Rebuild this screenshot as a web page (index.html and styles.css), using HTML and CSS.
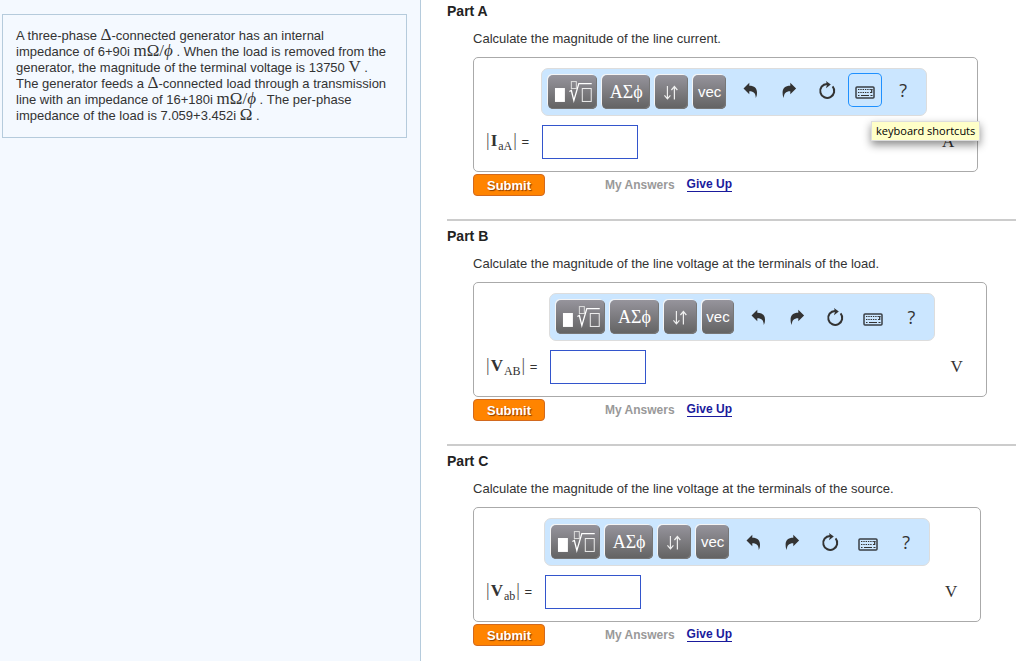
FILE: index.html
```
<!DOCTYPE html>
<html lang="en">
<head>
    <meta charset="UTF-8">
    <meta name="viewport" content="width=device-width, initial-scale=1.0">
    <title>Three-phase generator</title>
    <link rel="stylesheet" href="styles.css">
</head>
<body>
    <!-- shared toolbar icons -->
    <svg class="sprite" aria-hidden="true">
        <symbol id="i-template" viewBox="0 0 49 34">
            <rect x="7" y="13" width="10" height="14" fill="#fff"/>
            <rect x="23.5" y="6.5" width="5" height="7" fill="none" stroke="#ddd"/>
            <path d="M21.500 16.500L23.500 15.500L26 25.500L31 8.500H44" fill="none" stroke="#fff" stroke-width="1.300"/>
            <rect x="34.500" y="13.500" width="9" height="13" fill="none" stroke="#eee"/>
        </symbol>
        <symbol id="i-arrows" viewBox="0 0 33 34">
            <path d="M12.500 11V24M9.500 20.500L12.500 24L15.500 20.500M19.500 24.500V11.500M16.500 15L19.500 11.500L22.500 15" fill="none" stroke="#eee" stroke-width="1.200"/>
        </symbol>
        <symbol id="i-undo" viewBox="0 0 34 34">
            <path d="M9.500 15.500L15.300 9.800V12.800C20.500 12.800 23 15.500 23 19.500C23 22 22.600 23.500 21.800 25C21.600 20.500 20 18.300 15.300 18.300V21.300Z" fill="#333"/>
        </symbol>
        <symbol id="i-redo" viewBox="0 0 34 34">
            <path d="M24.100 15.500L18.300 9.800V12.800C13.100 12.800 10.600 15.500 10.600 19.500C10.600 22 11 23.500 11.800 25C12 20.500 13.600 18.300 18.300 18.300V21.300Z" fill="#333"/>
        </symbol>
        <symbol id="i-reset" viewBox="0 0 34 34">
            <path d="M17 10.900A7 7 0 1 0 22.600 13.400" fill="none" stroke="#333" stroke-width="2"/>
            <path d="M16 8L20.800 11.500L16 15.300L17 11.500Z" fill="#333"/>
        </symbol>
        <symbol id="i-keyboard" viewBox="0 0 34 34">
            <rect x="8" y="14" width="18" height="11" rx="1" fill="none" stroke="#3a3f45" stroke-width="1.500"/>
            <path d="M10 16.500H24.500M10 19.500H21" fill="none" stroke="#333" stroke-width="1.200" stroke-dasharray="1.400 0.900"/>
            <path d="M23.700 16V19.500H22M10 22.500H11.500M13 22.500H21M22.500 22.500H24.500" fill="none" stroke="#333" stroke-width="1.200"/>
        </symbol>
    </svg>

    <div class="page">
        <aside class="sidebar">
            <p class="problem">A three-phase <span class="math">Δ</span>-connected generator has an internal impedance of 6+90i <span class="math">mΩ/<i>ϕ</i></span> . When the load is removed from the generator, the magnitude of the terminal voltage is 13750 <span class="math">V</span> . The generator feeds a <span class="math">Δ</span>-connected load through a transmission line with an impedance of 16+180i <span class="math">mΩ/<i>ϕ</i></span> . The per-phase impedance of the load is 7.059+3.452i <span class="math">Ω</span> .</p>
        </aside>

        <main class="parts">
            <section class="part">
                <h2>Part A</h2>
                <div class="part-body">
                    <p class="question">Calculate the magnitude of the line current.</p>
                    <div class="answer-box">
                        <div class="toolbar">
                            <button type="button" class="key wide" aria-label="templates"><svg><use href="#i-template"/></svg></button>
                            <button type="button" class="key wide greek">ΑΣϕ</button>
                            <button type="button" class="key" aria-label="arrows"><svg><use href="#i-arrows"/></svg></button>
                            <button type="button" class="key">vec</button>
                            <div class="tools">
                                <button type="button" class="tool" aria-label="undo"><svg><use href="#i-undo"/></svg></button>
                                <button type="button" class="tool" aria-label="redo"><svg><use href="#i-redo"/></svg></button>
                                <button type="button" class="tool" aria-label="reset"><svg><use href="#i-reset"/></svg></button>
                                <div class="tip-anchor">
                                    <button type="button" class="tool active" aria-label="keyboard shortcuts"><svg><use href="#i-keyboard"/></svg></button>
                                    <span class="tooltip" role="tooltip">keyboard shortcuts</span>
                                </div>
                                <button type="button" class="tool help">?</button>
                            </div>
                        </div>
                        <label for="answer-a"><span class="math"><span class="bar">|</span><b>I</b><sub>aA</sub><span class="bar">|</span></span> =</label>
                        <input type="text" id="answer-a">
                        <span class="unit">A</span>
                    </div>
                    <div class="actions">
                        <button type="button" class="submit">Submit</button>
                        <span class="my-answers">My Answers</span>
                        <a href="#" class="give-up">Give Up</a>
                    </div>
                </div>
            </section>

            <section class="part">
                <h2>Part B</h2>
                <div class="part-body">
                    <p class="question">Calculate the magnitude of the line voltage at the terminals of the load.</p>
                    <div class="answer-box">
                        <div class="toolbar">
                            <button type="button" class="key wide" aria-label="templates"><svg><use href="#i-template"/></svg></button>
                            <button type="button" class="key wide greek">ΑΣϕ</button>
                            <button type="button" class="key" aria-label="arrows"><svg><use href="#i-arrows"/></svg></button>
                            <button type="button" class="key">vec</button>
                            <div class="tools">
                                <button type="button" class="tool" aria-label="undo"><svg><use href="#i-undo"/></svg></button>
                                <button type="button" class="tool" aria-label="redo"><svg><use href="#i-redo"/></svg></button>
                                <button type="button" class="tool" aria-label="reset"><svg><use href="#i-reset"/></svg></button>
                                <button type="button" class="tool" aria-label="keyboard shortcuts"><svg><use href="#i-keyboard"/></svg></button>
                                <button type="button" class="tool help">?</button>
                            </div>
                        </div>
                        <label for="answer-b"><span class="math"><span class="bar">|</span><b>V</b><sub>AB</sub><span class="bar">|</span></span> =</label>
                        <input type="text" id="answer-b">
                        <span class="unit">V</span>
                    </div>
                    <div class="actions">
                        <button type="button" class="submit">Submit</button>
                        <span class="my-answers">My Answers</span>
                        <a href="#" class="give-up">Give Up</a>
                    </div>
                </div>
            </section>

            <section class="part">
                <h2>Part C</h2>
                <div class="part-body">
                    <p class="question">Calculate the magnitude of the line voltage at the terminals of the source.</p>
                    <div class="answer-box">
                        <div class="toolbar">
                            <button type="button" class="key wide" aria-label="templates"><svg><use href="#i-template"/></svg></button>
                            <button type="button" class="key wide greek">ΑΣϕ</button>
                            <button type="button" class="key" aria-label="arrows"><svg><use href="#i-arrows"/></svg></button>
                            <button type="button" class="key">vec</button>
                            <div class="tools">
                                <button type="button" class="tool" aria-label="undo"><svg><use href="#i-undo"/></svg></button>
                                <button type="button" class="tool" aria-label="redo"><svg><use href="#i-redo"/></svg></button>
                                <button type="button" class="tool" aria-label="reset"><svg><use href="#i-reset"/></svg></button>
                                <button type="button" class="tool" aria-label="keyboard shortcuts"><svg><use href="#i-keyboard"/></svg></button>
                                <button type="button" class="tool help">?</button>
                            </div>
                        </div>
                        <label for="answer-c"><span class="math"><span class="bar">|</span><b>V</b><sub>ab</sub><span class="bar">|</span></span> =</label>
                        <input type="text" id="answer-c">
                        <span class="unit">V</span>
                    </div>
                    <div class="actions">
                        <button type="button" class="submit">Submit</button>
                        <span class="my-answers">My Answers</span>
                        <a href="#" class="give-up">Give Up</a>
                    </div>
                </div>
            </section>
        </main>
    </div>
</body>
</html>
```
FILE: styles.css
```
* {
    box-sizing: border-box;
}
body {
    margin: 0;
    background: #fff;
    color: #333;
    font: 13px/16px "Liberation Sans", Arial, sans-serif;
}
h2, p {
    margin: 0;
}
button {
    padding: 0;
    font-family: inherit;
    cursor: pointer;
}
.sprite {
    display: none;
}
.page {
    display: flex;
    min-height: 100vh;
}
.sidebar {
    width: 41.44%;
    padding: 14px 13px 0 2px;
    background: #f4f9ff;
    border-right: 1px solid #b5cbdc;
}
.problem {
    padding: 13px 16px 13px 13px;
    border: 1px solid #b5cbdc;
}
.math, .unit {
    font-family: "Liberation Serif", "Times New Roman", serif;
    font-size: 17px;
    line-height: 0;
}
.parts {
    flex: 1;
    padding: 3px 0 0 26px;
}
.part + .part {
    margin-top: 23px;
    padding-top: 7px;
    border-top: 2px solid #ccc;
}
.part h2 {
    color: #222;
    font-size: 14px;
    line-height: 16px;
}
.part-body {
    padding: 12px 0 0 26px;
}
.answer-box {
    display: grid;
    grid-template-columns: auto 386px auto;
    row-gap: 9px;
    width: max-content;
    margin-top: 10px;
    padding: 10px 23px 12px 11px;
    border: 1px solid #aaa;
    border-radius: 5px;
}
.toolbar {
    grid-column: 2;
    display: flex;
    align-items: center;
    gap: 5px;
    height: 48px;
    padding: 0 6px;
    background: #cbe6ff;
    border: 1px solid #ddd;
    border-radius: 7px;
}
.key {
    width: 33px;
    height: 34px;
    border: 0;
    border-radius: 5px;
    background: linear-gradient(#96949c, #626262);
    box-shadow: -1px -1px 0 #f4f4f4, inset -1px -1px 0 #777;
    color: #fff;
    font-size: 15px;
    line-height: 32px;
}
.key.wide {
    width: 49px;
}
.key.greek {
    font-family: "Liberation Serif", "Times New Roman", serif;
    font-size: 18px;
}
.key svg, .tool svg {
    display: block;
    width: 100%;
    height: 34px;
}
.tools {
    display: flex;
    gap: 4px;
    margin-left: 3px;
}
.tool {
    width: 34px;
    height: 34px;
    border: 0;
    border-radius: 5px;
    background: none;
    color: #333;
}
.tool.active {
    box-shadow: inset 0 0 0 1px #1e90ff;
}
.tool.help {
    font-family: "Open Sans", sans-serif;
    font-size: 18px;
}
.tip-anchor {
    position: relative;
}
.tooltip {
    position: absolute;
    top: 48px;
    left: 23px;
    padding: 1px 4px;
    border: 1px solid #ddd;
    background: #ffffc8;
    box-shadow: 0 4px 9px rgba(0, 0, 0, 0.45);
    color: #000;
    font: 11px/16px "Open Sans", sans-serif;
    white-space: nowrap;
}
.answer-box label {
    grid-column: 1;
    align-self: center;
    padding-right: 12px;
    white-space: nowrap;
}
.answer-box sub {
    margin-left: 1px;
    font-size: 12px;
    line-height: 0;
    vertical-align: -4px;
}
.bar {
    margin: 0 1px;
    font-size: 18px;
    color: #555;
}
.answer-box input {
    width: 96px;
    height: 34px;
    margin-left: 1px;
    padding: 0 6px;
    border: 1px solid #35c;
    border-radius: 0;
    background: #fff;
    font-size: 16px;
}
.unit {
    align-self: center;
    padding-left: 15px;
    line-height: 16px;
}
.actions {
    display: flex;
    align-items: center;
    margin-top: 2px;
    font-size: 12px;
    font-weight: bold;
}
.submit {
    width: 72px;
    height: 22px;
    border: 1px solid #d2691e;
    border-radius: 4px;
    background: #ff8400;
    color: #fff;
    font-size: 13px;
    font-weight: bold;
    text-shadow: 1px 1px 1px #8a3c00;
}
.my-answers {
    margin: 0 12px 0 60px;
    color: #999;
}
.give-up {
    border-bottom: 1px solid #1a1a9c;
    color: #1a1a9c;
    line-height: 13px;
    text-decoration: none;
}
```
